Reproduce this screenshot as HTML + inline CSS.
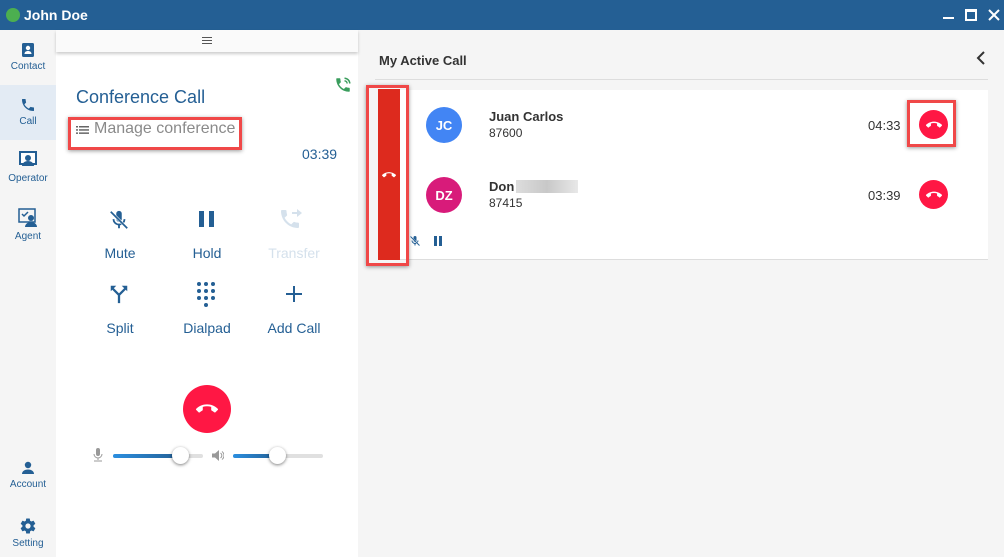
<!DOCTYPE html>
<html><head><meta charset="utf-8"><style>
*{box-sizing:border-box;margin:0;padding:0}
body{width:1004px;height:557px;overflow:hidden;font-family:"Liberation Sans",Arial,sans-serif;background:#f5f5f5;position:relative}
.abs{position:absolute}
.tb{left:0;top:0;width:1004px;height:30px;background:#245f94;color:#fff}
.side{left:0;top:30px;width:56px;height:527px;background:#f5f5f5}
.si{position:absolute;left:0;width:56px;text-align:center;font-size:10px;color:#245f94}
.mid{left:56px;top:30px;width:302px;height:527px;background:#fff}
.blue{color:#245f94}
.lbl{position:absolute;width:80px;text-align:center;font-size:14px;color:#245f94}
.hang{border-radius:50%;background:#ff1744;display:flex;align-items:center;justify-content:center}
.av{width:36px;height:36px;border-radius:50%;color:#fff;font-size:13px;font-weight:bold;display:flex;align-items:center;justify-content:center}
.rbox{border:3px solid #f04848;box-shadow:0 1px 4px rgba(0,0,0,.4)}
</style></head><body>
<svg width="0" height="0" style="position:absolute"><defs>
<symbol id="hg" viewBox="0 0 24 24"><path fill="#fff" d="M12 9c-1.6 0-3.15.25-4.6.72v3.1c0 .39-.23.74-.56.9-.98.49-1.870 1.12-2.66 1.85-.18.18-.43.28-.7.28-.28 0-.53-.11-.71-.29L.29 13.08a.96.96 0 010-1.4C3.34 8.78 7.46 7 12 7s8.66 1.78 11.71 4.670a.99.99 0 010 1.41l-2.48 2.48c-.18.18-.43.29-.71.29-.27 0-.52-.11-.7-.28-.79-.74-1.69-1.36-2.67-1.85a1 1 0 01-.56-.9v-3.1C15.15 9.25 13.6 9 12 9z"/></symbol>
</defs></svg>
<div class="abs tb">
 <div class="abs" style="left:6px;top:8px;width:14px;height:14px;border-radius:50%;background:#4caf50"></div>
 <div class="abs" style="left:24px;top:7px;font-size:14px;font-weight:bold">John Doe</div>
 <div class="abs" style="left:943px;top:17px;width:11px;height:2px;background:#fff"></div>
 <div class="abs" style="left:965px;top:9px;width:12px;height:12px;border:2px solid #fff;border-top-width:3px"></div>
 <svg class="abs" style="left:988px;top:9px" width="12" height="12"><path d="M1 1l10 10M11 1L1 11" stroke="#fff" stroke-width="2"/></svg>
</div>
<div class="abs side">
 <div class="si" style="top:12px"><svg width="16" height="16" viewBox="0 0 16 16"><rect x="2" y="1" width="12" height="14" rx="1.5" fill="#245f94"/><circle cx="8" cy="6" r="2.2" fill="#fff"/><path d="M4.5 12c0-2 1.5-3 3.5-3s3.5 1 3.5 3z" fill="#fff"/></svg><div>Contact</div></div>
 <div class="si" style="top:55px;height:55px;background:#e3ebf4;padding-top:12px"><svg width="16" height="16" viewBox="0 0 24 24"><path fill="#245f94" d="M6.6 10.8c1.4 2.8 3.8 5.1 6.6 6.6l2.2-2.2c.3-.3.7-.4 1-.2 1.1.4 2.3.6 3.6.6.6 0 1 .4 1 1V20c0 .6-.4 1-1 1C10.6 21 3 13.4 3 4c0-.6.4-1 1-1h3.5c.6 0 1 .4 1 1 0 1.3.2 2.5.6 3.6.1.3 0 .7-.2 1z"/></svg><div>Call</div></div>
 <div class="si" style="top:120px"><svg width="20" height="20" viewBox="0 0 20 20"><rect x="1" y="1" width="18" height="14" fill="#245f94"/><rect x="3" y="3" width="14" height="10" fill="#fff"/><circle cx="10" cy="8" r="3" fill="#245f94"/><path d="M4 16c0-3 3-5 6-5s6 2 6 5z" fill="#245f94"/></svg><div>Operator</div></div>
 <div class="si" style="top:178px"><svg width="20" height="20" viewBox="0 0 20 20"><rect x="1" y="1" width="16" height="13" fill="none" stroke="#245f94" stroke-width="1.5"/><path d="M4 6l2 2 4-4" stroke="#245f94" fill="none" stroke-width="1.5"/><circle cx="13" cy="10" r="3" fill="#245f94"/><path d="M7 19c0-3 3-5 6-5s6 2 6 5z" fill="#245f94"/></svg><div>Agent</div></div>
 <div class="si" style="top:430px"><svg width="16" height="16" viewBox="0 0 16 16"><circle cx="8" cy="5" r="3.2" fill="#245f94"/><path d="M2 14c0-3 3-4.5 6-4.5s6 1.5 6 4.5z" fill="#245f94"/></svg><div>Account</div></div>
 <div class="si" style="top:487px"><svg width="18" height="18" viewBox="0 0 24 24"><path fill="#245f94" d="M19.4 13c.04-.3.06-.6.06-1s-.02-.7-.06-1l2.1-1.65c.2-.15.24-.42.12-.64l-2-3.46c-.12-.22-.39-.3-.61-.22l-2.49 1a7.3 7.3 0 00-1.73-1l-.38-2.65A.49.49 0 0014 2h-4c-.25 0-.46.18-.49.42l-.38 2.650c-.61.25-1.17.59-1.69 1l-2.49-1a.5.5 0 00-.61.22l-2 3.46c-.13.22-.07.49.12.64L4.57 11c-.04.32-.07.66-.07 1s.02.68.06 1l-2.1 1.65a.5.5 0 00-.12.64l2 3.46c.12.22.39.3.61.22l2.49-1c.52.4 1.08.73 1.69 1l.38 2.65c.03.24.24.42.49.42h4c.25 0 .46-.18.49-.42l.38-2.65c.61-.25 1.17-.59 1.69-1l2.49 1c.23.09.49 0 .61-.22l2-3.46a.5.5 0 00-.12-.64zM12 15.5A3.5 3.5 0 1112 8.5a3.5 3.5 0 010 7z"/></svg><div>Setting</div></div>
</div>
<div class="abs mid">
 <div class="abs" style="left:0;top:0;width:302px;height:22px;background:#fafafa;box-shadow:0 2px 3px rgba(0,0,0,.2)"><div style="position:absolute;left:146px;top:7px;width:10px;height:1px;background:#555;box-shadow:0 3px 0 #555,0 6px 0 #555"></div></div>
 <svg class="abs" style="left:278px;top:46px" width="18" height="18" viewBox="0 0 24 24"><path fill="#3a9d5d" d="M6.6 10.8c1.4 2.8 3.8 5.1 6.6 6.6l2.2-2.2c.3-.3.7-.4 1-.2 1.1.4 2.3.6 3.6.6.6 0 1 .4 1 1V20c0 .6-.4 1-1 1C10.6 21 3 13.4 3 4c0-.6.4-1 1-1h3.5c.6 0 1 .4 1 1 0 1.3.2 2.5.6 3.6.1.3 0 .7-.2 1z"/><path d="M14 3a7 7 0 017 7M14 6.5a3.5 3.5 0 013.5 3.5" stroke="#3a9d5d" stroke-width="2" fill="none"/></svg>
 <div class="abs blue" style="left:20px;top:57px;font-size:18px">Conference Call</div>
 <div class="abs rbox" style="left:12px;top:87px;width:174px;height:33px"></div>
 <svg class="abs" style="left:20px;top:95px" width="14" height="10"><g fill="#666"><rect x="0" y="1" width="2" height="1.5"/><rect x="0" y="4.2" width="2" height="1.5"/><rect x="0" y="7.4" width="2" height="1.5"/><rect x="3" y="1" width="10" height="1.5"/><rect x="3" y="4.2" width="10" height="1.5"/><rect x="3" y="7.4" width="10" height="1.5"/></g></svg>
 <div class="abs" style="left:38px;top:90px;font-size:16px;color:#8a8a8a">Manage conference</div>
 <div class="abs blue" style="left:246px;top:116px;font-size:14px">03:39</div>
 <svg class="abs" style="left:52px;top:178px" width="22" height="24" viewBox="0 0 24 24"><path fill="#245f94" d="M12 14a3 3 0 003-3V5a3 3 0 00-6 0v6a3 3 0 003 3zm5-3a5 5 0 01-10 0H5a7 7 0 006 6.9V21h2v-3.1A7 7 0 0019 11z"/><path d="M3 3l18 18" stroke="#fff" stroke-width="3"/><path d="M3 3l18 18" stroke="#245f94" stroke-width="1.8"/></svg>
 <div class="lbl" style="left:24px;top:215px">Mute</div>
 <div class="abs" style="left:143px;top:181px;width:5px;height:16px;background:#245f94"></div><div class="abs" style="left:153px;top:181px;width:5px;height:16px;background:#245f94"></div>
 <div class="lbl" style="left:111px;top:215px">Hold</div>
 <svg class="abs" style="left:223px;top:177px" width="26" height="24" viewBox="0 0 24 24"><path fill="#d5e1ec" d="M4.6 10.8c1.4 2.8 3.8 5.1 6.6 6.6l2.2-2.2c.3-.3.7-.4 1-.2 1.1.4 2.3.6 3.6.6.6 0 1 .4 1 1V20c0 .6-.4 1-1 1C8.6 21 1 13.4 1 4c0-.6.4-1 1-1h3.5c.6 0 1 .4 1 1 0 1.3.2 2.5.6 3.6.1.3 0 .7-.2 1zM17 2l5 4-5 4V7h-5V5h5z"/></svg>
 <div class="lbl" style="left:198px;top:215px;color:#d5e1ec">Transfer</div>
 <svg class="abs" style="left:52px;top:253px" width="22" height="22" viewBox="0 0 24 24"><path d="M12 22v-9L5 6M12 13l7-7" stroke="#245f94" stroke-width="2.5" fill="none"/><path d="M3 3h6L3 9zM21 3h-6l6 6z" fill="#245f94"/></svg>
 <div class="lbl" style="left:24px;top:290px">Split</div>
 <svg class="abs" style="left:140px;top:251px" width="20" height="26" viewBox="0 0 20 26"><g fill="#245f94"><circle cx="3" cy="3" r="2"/><circle cx="10" cy="3" r="2"/><circle cx="17" cy="3" r="2"/><circle cx="3" cy="10" r="2"/><circle cx="10" cy="10" r="2"/><circle cx="17" cy="10" r="2"/><circle cx="3" cy="17" r="2"/><circle cx="10" cy="17" r="2"/><circle cx="17" cy="17" r="2"/><circle cx="10" cy="24" r="2"/></g></svg>
 <div class="lbl" style="left:111px;top:290px">Dialpad</div>
 <div class="abs" style="left:230px;top:263px;width:16px;height:2px;background:#245f94"></div>
 <div class="abs" style="left:237px;top:256px;width:2px;height:16px;background:#245f94"></div>
 <div class="lbl" style="left:198px;top:290px">Add Call</div>
 <div class="abs hang" style="left:127px;top:355px;width:48px;height:48px"><svg width="22" height="22"><use href="#hg"/></svg></div>
 <svg class="abs" style="left:37px;top:418px" width="10" height="14" viewBox="0 0 10 14"><rect x="3" y="0" width="4" height="8" rx="2" fill="#999"/><path d="M1 6a4 4 0 008 0M5 10v2M1 13h8" stroke="#999" fill="none"/></svg>
 <div class="abs" style="left:57px;top:424px;width:90px;height:4px;border-radius:2px;background:#e0e0e0"></div>
 <div class="abs" style="left:57px;top:424px;width:68px;height:4px;border-radius:2px;background:linear-gradient(90deg,#2b8fe0,#245f94)"></div>
 <div class="abs" style="left:116px;top:417px;width:17px;height:17px;border-radius:50%;background:#fff;box-shadow:0 1px 3px rgba(0,0,0,.5)"></div>
 <svg class="abs" style="left:156px;top:420px" width="12" height="11" viewBox="0 0 12 11"><path d="M0 3.5h3L7 0v11L3 7.5H0z" fill="#999"/><path d="M8.5 3a3 3 0 010 5M10 1.5a5 5 0 010 8" stroke="#999" fill="none"/></svg>
 <div class="abs" style="left:177px;top:424px;width:90px;height:4px;border-radius:2px;background:#e0e0e0"></div>
 <div class="abs" style="left:177px;top:424px;width:45px;height:4px;border-radius:2px;background:linear-gradient(90deg,#2b8fe0,#245f94)"></div>
 <div class="abs" style="left:213px;top:417px;width:17px;height:17px;border-radius:50%;background:#fff;box-shadow:0 1px 3px rgba(0,0,0,.5)"></div>
</div>
<div class="abs" style="left:379px;top:53px;font-size:13px;font-weight:bold;color:#333">My Active Call</div>
<svg class="abs" style="left:976px;top:51px" width="10" height="14"><path d="M8 1L2 7l6 6" stroke="#333" stroke-width="2" fill="none"/></svg>
<div class="abs" style="left:375px;top:79px;width:613px;height:1px;background:#ddd"></div>
<div class="abs" style="left:400px;top:90px;width:588px;height:170px;background:#fff;border-bottom:1px solid #ddd"></div>
<div class="abs rbox" style="left:366px;top:85px;width:43px;height:181px"></div>
<div class="abs" style="left:378px;top:89px;width:22px;height:171px;background:#dd2a1e;display:flex;align-items:center;justify-content:center"><svg width="14" height="14"><use href="#hg"/></svg></div>
<div class="abs av" style="left:426px;top:107px;background:#4285f4">JC</div>
<div class="abs" style="left:489px;top:109px;font-size:13px;font-weight:bold;color:#333">Juan Carlos</div>
<div class="abs" style="left:489px;top:126px;font-size:12px;color:#333">87600</div>
<div class="abs" style="left:868px;top:118px;font-size:13px;color:#333">04:33</div>
<div class="abs rbox" style="left:907px;top:100px;width:49px;height:47px"></div>
<div class="abs hang" style="left:919px;top:110px;width:29px;height:29px"><svg width="16" height="16"><use href="#hg"/></svg></div>
<div class="abs av" style="left:426px;top:177px;background:#d81b7a">DZ</div>
<div class="abs" style="left:489px;top:179px;font-size:13px;font-weight:bold;color:#333">Don</div>
<div class="abs" style="left:516px;top:180px;width:62px;height:13px;background:linear-gradient(90deg,#ddd,#c8c8c8,#e8e8e8)"></div>
<div class="abs" style="left:489px;top:196px;font-size:12px;color:#333">87415</div>
<div class="abs" style="left:868px;top:188px;font-size:13px;color:#333">03:39</div>
<div class="abs hang" style="left:919px;top:180px;width:29px;height:29px"><svg width="16" height="16"><use href="#hg"/></svg></div>
<svg class="abs" style="left:409px;top:234px" width="12" height="14" viewBox="0 0 24 24"><path fill="#245f94" d="M12 14a3 3 0 003-3V5a3 3 0 00-6 0v6a3 3 0 003 3zm5-3a5 5 0 01-10 0H5a7 7 0 006 6.9V21h2v-3.1A7 7 0 0019 11z"/><path d="M3 3l18 18" stroke="#fff" stroke-width="3"/><path d="M3 3l18 18" stroke="#245f94" stroke-width="2"/></svg>
<div class="abs" style="left:434px;top:236px;width:3px;height:10px;background:#245f94"></div><div class="abs" style="left:439px;top:236px;width:3px;height:10px;background:#245f94"></div>
</body></html>
